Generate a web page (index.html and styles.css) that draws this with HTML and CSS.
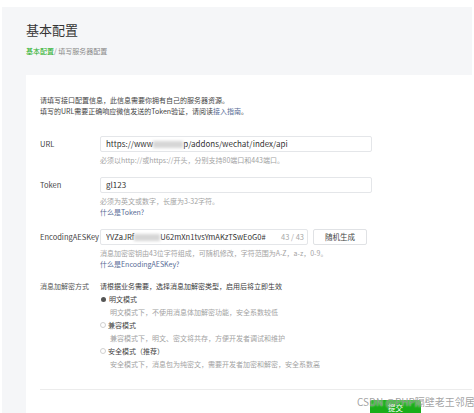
FILE: index.html
```html
<!DOCTYPE html>
<html lang="zh-CN">
<head>
<meta charset="utf-8">
<title>基本配置</title>
<link rel="stylesheet" href="styles.css">
</head>
<body>
<div class="page">
  <div class="header">
    <h1 class="title">基本配置</h1>
    <div class="crumb"><span class="crumb-cur">基本配置</span>/ 填写服务器配置</div>
  </div>
  <div class="card">
    <div class="intro">
      <p>请填写接口配置信息，此信息需要你拥有自己的服务器资源。</p>
      <p>填写的URL需要正确响应微信发送的Token验证，请阅读<a class="link">接入指南</a>。</p>
    </div>
    <div class="row row-url">
      <div class="label">URL</div>
      <div class="ctrl">
        <div class="input input-wide">https://www<span class="blur blur-url"></span>p/addons/wechat/index/api</div>
        <p class="hint">必须以http://或https://开头，分别支持80端口和443端口。</p>
      </div>
    </div>
    <div class="row row-token">
      <div class="label">Token</div>
      <div class="ctrl">
        <div class="input input-wide">gl123</div>
        <p class="hint">必须为英文或数字，长度为3-32字符。</p>
        <p class="hint"><a class="link">什么是Token?</a></p>
      </div>
    </div>
    <div class="row row-aes">
      <div class="label">EncodingAESKey</div>
      <div class="ctrl">
        <div class="aes-line">
          <div class="input input-aes"><span class="aes-val">YVZaJRf<span class="blur blur-aes"></span>U62mXn1tvsYmAKzTSwEoG0#</span><span class="count">43 / 43</span></div>
          <button class="btn">随机生成</button>
        </div>
        <p class="hint">消息加密密钥由43位字符组成，可随机修改，字符范围为A-Z，a-z，0-9。</p>
        <p class="hint"><a class="link">什么是EncodingAESKey?</a></p>
      </div>
    </div>
    <div class="row row-mode">
      <div class="label label-mode">消息加解密方式</div>
      <div class="ctrl">
        <p class="mode-line mode-intro">请根据业务需要，选择消息加解密类型，启用后将立即生效</p>
        <p class="mode-line option"><span class="radio radio-on"></span>明文模式</p>
        <p class="mode-line desc">明文模式下，不使用消息体加解密功能，安全系数较低</p>
        <p class="mode-line option"><span class="radio"></span>兼容模式</p>
        <p class="mode-line desc">兼容模式下，明文、密文将共存，方便开发者调试和维护</p>
        <p class="mode-line option"><span class="radio"></span>安全模式（推荐）</p>
        <p class="mode-line desc">安全模式下，消息包为纯密文，需要开发者加密和解密，安全系数高</p>
      </div>
    </div>
    <div class="sep"></div>
    <div class="footer"><button class="submit">提交</button></div>
  </div>
</div>
<div class="watermark">CSDN @PHP隔壁老王邻居</div>
</body>
</html>
```
FILE: styles.css
```css
* { box-sizing: border-box; }
html, body { margin: 0; padding: 0; background: #fff; }
body {
  font-family: "Noto Sans CJK SC", "Noto Sans", sans-serif;
  color: #333;
  width: 474px;
  height: 413px;
  overflow: hidden;
  position: relative;
}
p { margin: 0; }
.page {
  margin: 7px 2px 0 2px;
  background: #f5f6f8;
  padding: 14px 0 0 24px;
  min-height: 420px;
}
.title {
  margin: 0;
  font-size: 13px;
  line-height: 17px;
  font-weight: 400;
  color: #353535;
}
.crumb {
  margin-top: 7.5px;
  font-size: 7px;
  line-height: 11px;
  color: #8a8a8a;
}
.crumb-cur { color: #1aad19; }
.card {
  margin-top: 18.5px;
  background: #fff;
  padding: 19.5px 0 30px 14px;
}
.intro {
  font-size: 7px;
  line-height: 11px;
  color: #444;
}
.link { color: #576b95; text-decoration: none; }
.row {
  display: flex;
  align-items: flex-start;
}
.row-url { margin-top: 19.5px; }
.row-token { margin-top: 11px; }
.row-aes { margin-top: 10.5px; }
.row-mode { margin-top: 10px; }
.label {
  width: 60px;
  flex: none;
  font-size: 7.5px;
  line-height: 16px;
  color: #444;
}
.label-mode { line-height: 13px; font-size: 7px; color: #555; }
.ctrl { flex: 1; min-width: 0; }
.input {
  height: 16px;
  border: 1px solid #e4e6e9;
  border-radius: 2px;
  background: #fff;
  font-size: 8px;
  line-height: 14px;
  padding: 0 5px;
  color: #333;
  white-space: nowrap;
  overflow: hidden;
}
.input-wide { width: 272px; }
.blur {
  display: inline-block;
  height: 7px;
  background: #d6d6d6;
  filter: blur(1.5px);
  vertical-align: middle;
}
.blur-url { width: 30px; }
.blur-aes { width: 26px; }
.hint {
  font-size: 7px;
  line-height: 11px;
  color: #a3a3a3;
  margin-top: 3px;
}
.hint + .hint { margin-top: 0; }
.aes-line {
  display: flex;
  gap: 5px;
}
.input-aes {
  width: 208px;
  display: flex;
  padding-right: 3px;
}
.aes-val { flex: 1; min-width: 0; overflow: hidden; font-size: 7.6px; }
.count { color: #a8a8a8; font-size: 7.5px; flex: none; padding-left: 3px; }
.btn {
  width: 54px;
  height: 16px;
  border: 1px solid #e0e2e5;
  border-radius: 2px;
  background: #fff;
  font-family: inherit;
  font-size: 7.5px;
  color: #444;
  padding: 0;
}
.mode-line {
  font-size: 7px;
  line-height: 13px;
  height: 13px;
}
.mode-intro { color: #3a3a3a; }
.option { color: #444; display: flex; align-items: center; }
.desc { color: #a3a3a3; padding-left: 10px; }
.radio {
  width: 6px;
  height: 6px;
  border-radius: 50%;
  border: 1px solid #d0d0d0;
  margin-right: 2px;
  flex: none;
}
.radio-on {
  border: none;
  background: #555;
  width: 5px;
  height: 5px;
  margin: 0 3px 0 1px;
}
.sep {
  margin-top: 18px;
  height: 1px;
  background: #ececec;
}
.footer {
  padding-left: 330px;
  margin-top: 10px;
}
.submit {
  display: block;
  width: 51px;
  height: 16px;
  border: none;
  border-radius: 2px;
  background: #1aad19;
  color: #fff;
  font-family: inherit;
  font-size: 7.5px;
  line-height: 16px;
  padding: 0;
}
.watermark {
  position: absolute;
  left: 357px;
  top: 395px;
  font-size: 10px;
  line-height: 14px;
  color: rgba(120, 120, 120, 0.7);
  text-shadow: 0 0 2px rgba(255, 255, 255, 0.9);
  white-space: nowrap;
}
```
